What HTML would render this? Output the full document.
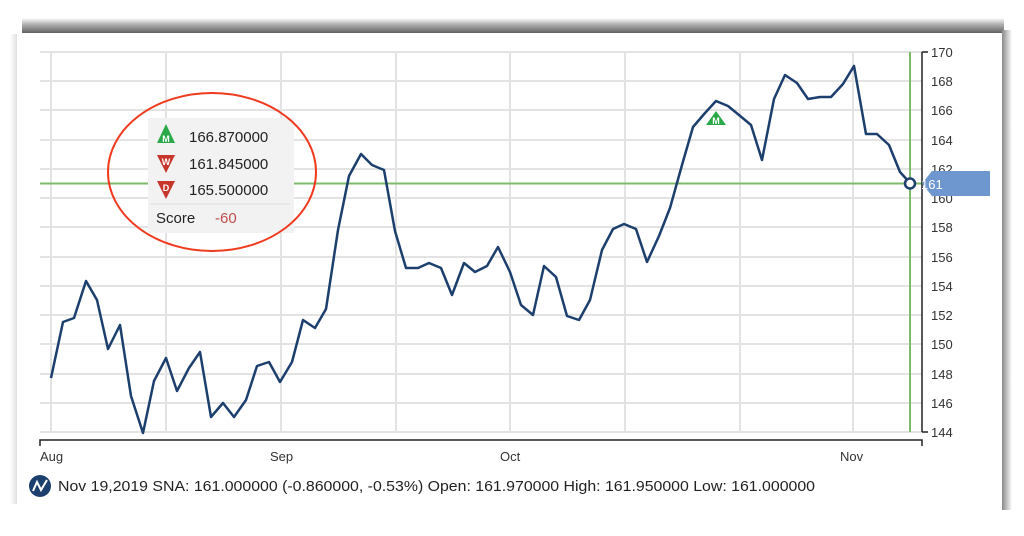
<!DOCTYPE html>
<html><head><style>
html,body{margin:0;padding:0;background:#fff;width:1024px;height:536px;overflow:hidden}
text{font-family:"Liberation Sans",sans-serif}
</style></head><body>
<svg width="1024" height="536" viewBox="0 0 1024 536" xmlns="http://www.w3.org/2000/svg">
<defs>
<linearGradient id="tg" x1="0" y1="0" x2="0" y2="1"><stop offset="0" stop-color="#fff"/><stop offset="0.4" stop-color="#b0b0b0"/><stop offset="1" stop-color="#5a5a5a"/></linearGradient>
<linearGradient id="rg" x1="0" y1="0" x2="1" y2="0"><stop offset="0" stop-color="#888"/><stop offset="1" stop-color="#fff"/></linearGradient>
<linearGradient id="lg" x1="1" y1="0" x2="0" y2="0"><stop offset="0" stop-color="#ddd"/><stop offset="1" stop-color="#fff"/></linearGradient>
<linearGradient id="bg" x1="0" y1="0" x2="0" y2="1"><stop offset="0" stop-color="#888"/><stop offset="1" stop-color="#fff"/></linearGradient>
</defs>
<rect x="22" y="18" width="982" height="16" fill="url(#tg)"/>
<rect x="1002" y="30" width="10" height="480" fill="url(#rg)"/>
<rect x="10" y="34" width="8" height="470" fill="url(#lg)"/>
<rect x="17" y="33" width="985" height="472" fill="#fff"/>
<g stroke="#e3e3e3" stroke-width="2">
<line x1="40" y1="52" x2="922" y2="52"/><line x1="40" y1="81" x2="922" y2="81"/><line x1="40" y1="110" x2="922" y2="110"/><line x1="40" y1="140" x2="922" y2="140"/><line x1="40" y1="169" x2="922" y2="169"/><line x1="40" y1="198" x2="922" y2="198"/><line x1="40" y1="227" x2="922" y2="227"/><line x1="40" y1="257" x2="922" y2="257"/><line x1="40" y1="286" x2="922" y2="286"/><line x1="40" y1="315" x2="922" y2="315"/><line x1="40" y1="344" x2="922" y2="344"/><line x1="40" y1="374" x2="922" y2="374"/><line x1="40" y1="403" x2="922" y2="403"/><line x1="40" y1="432" x2="922" y2="432"/>
<line x1="51" y1="52" x2="51" y2="432"/><line x1="166" y1="52" x2="166" y2="432"/><line x1="281" y1="52" x2="281" y2="432"/><line x1="396" y1="52" x2="396" y2="432"/><line x1="510" y1="52" x2="510" y2="432"/><line x1="625" y1="52" x2="625" y2="432"/><line x1="740" y1="52" x2="740" y2="432"/><line x1="853" y1="52" x2="853" y2="432"/>
</g>
<line x1="40" y1="183.5" x2="922" y2="183.5" stroke="#7dbb6a" stroke-width="2"/>
<line x1="910" y1="52" x2="910" y2="432" stroke="#7dbb6a" stroke-width="2"/>
<path d="M922,52 V432 M922,52 H928 M922,432 H928" stroke="#222" stroke-width="1.5" fill="none"/>
<path d="M40,446 V440 H922 V446" stroke="#222" stroke-width="1.5" fill="none"/>
<g font-size="13" fill="#333">
<text x="931" y="57">170</text><text x="931" y="86">168</text><text x="931" y="115">166</text><text x="931" y="145">164</text><text x="931" y="174">162</text><text x="931" y="203">160</text><text x="931" y="232">158</text><text x="931" y="262">156</text><text x="931" y="291">154</text><text x="931" y="320">152</text><text x="931" y="349">150</text><text x="931" y="379">148</text><text x="931" y="408">146</text><text x="931" y="437">144</text>
<text x="40" y="461">Aug</text><text x="270" y="461">Sep</text><text x="500" y="461">Oct</text><text x="840" y="461">Nov</text>
</g>
<path d="M51,378 L63,322 L74,318 L86,281 L97,300 L108,349 L120,325 L131,396 L143,433 L154,381 L166,358 L177,391 L189,368 L200,352 L211,417 L223,403 L234,417 L246,400 L257,366 L269,362 L280,382 L292,362 L303,320 L315,328 L326,309 L338,230 L349,176 L361,154 L372,165 L384,170 L395,231 L406,268 L418,268 L429,263 L441,268 L452,295 L464,263 L475,272 L487,266 L498,247 L510,272 L521,305 L533,315 L544,266 L556,277 L567,316 L579,320 L590,300 L602,250 L613,229 L624,224 L636,229 L647,262 L659,236 L670,208 L682,165 L693,127 L705,113 L716,101 L728,106 L739,115 L751,125 L762,160 L774,99 L785,75 L797,83 L808,99 L820,97 L831,97 L843,84 L854,66 L866,134 L877,134 L889,145 L900,172 L910,183" fill="none" stroke="#1c3f6e" stroke-width="2.5" stroke-linejoin="round"/>
<polygon points="716,111 706,125 726,125" fill="#2aa84a"/><text x="716" y="124" font-size="9" font-weight="bold" fill="#fff" text-anchor="middle">M</text>
<polygon points="922,183.5 932,171 990,171 990,196 932,196" fill="#6f97cf"/>
<text x="921" y="189" font-size="13" fill="#fff">161</text>
<circle cx="910" cy="183.5" r="5" fill="#fff" stroke="#1c3f6e" stroke-width="2.5"/>
<rect x="148" y="118" width="146" height="115" fill="#f2f2f2"/>
<line x1="150" y1="204" x2="290" y2="204" stroke="#ddd"/>
<polygon points="166,124 157,143 175,143" fill="#2aa84a"/><text x="166" y="142" font-size="9" font-weight="bold" fill="#fff" text-anchor="middle">M</text>
<polygon points="157,155 175,155 166,173" fill="#c8352b"/><text x="166" y="165" font-size="9" font-weight="bold" fill="#fff" text-anchor="middle">W</text>
<polygon points="157,181 175,181 166,199" fill="#c8352b"/><text x="166" y="191" font-size="9" font-weight="bold" fill="#fff" text-anchor="middle">D</text>
<g font-size="15" fill="#222"><text x="189" y="142">166.870000</text><text x="189" y="169">161.845000</text><text x="189" y="195">165.500000</text><text x="156" y="223">Score</text></g>
<text x="215" y="223" font-size="15" fill="#c0504d">-60</text>
<ellipse cx="212" cy="172" rx="104" ry="79" fill="none" stroke="#f03a1e" stroke-width="2"/>
<circle cx="40" cy="486" r="11" fill="#1c3f6e"/>
<path d="M33,491 L37,482 L41,490 L47,480" fill="none" stroke="#fff" stroke-width="2"/>
<text x="58" y="491" font-size="14.5" fill="#222" textLength="757" lengthAdjust="spacingAndGlyphs">Nov 19,2019 SNA: 161.000000 (-0.860000, -0.53%) Open: 161.970000 High: 161.950000 Low: 161.000000</text>
</svg>
</body></html>
